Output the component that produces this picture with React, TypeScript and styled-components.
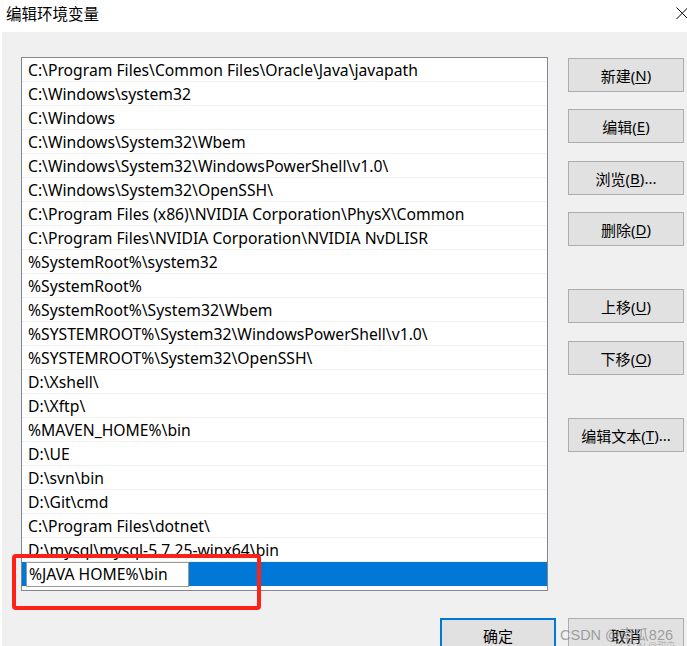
import React from 'react';
import styled, { createGlobalStyle } from 'styled-components';

const GlobalStyle = createGlobalStyle`
  html, body {
    margin: 0;
    padding: 0;
    background: #ffffff;
  }
  body {
    font-family: "Noto Sans", "Noto Sans CJK SC", sans-serif;
  }
`;

const paths = [
  'C:\\Program Files\\Common Files\\Oracle\\Java\\javapath',
  'C:\\Windows\\system32',
  'C:\\Windows',
  'C:\\Windows\\System32\\Wbem',
  'C:\\Windows\\System32\\WindowsPowerShell\\v1.0\\',
  'C:\\Windows\\System32\\OpenSSH\\',
  'C:\\Program Files (x86)\\NVIDIA Corporation\\PhysX\\Common',
  'C:\\Program Files\\NVIDIA Corporation\\NVIDIA NvDLISR',
  '%SystemRoot%\\system32',
  '%SystemRoot%',
  '%SystemRoot%\\System32\\Wbem',
  '%SYSTEMROOT%\\System32\\WindowsPowerShell\\v1.0\\',
  '%SYSTEMROOT%\\System32\\OpenSSH\\',
  'D:\\Xshell\\',
  'D:\\Xftp\\',
  '%MAVEN_HOME%\\bin',
  'D:\\UE',
  'D:\\svn\\bin',
  'D:\\Git\\cmd',
  'C:\\Program Files\\dotnet\\',
  'D:\\mysql\\mysql-5.7.25-winx64\\bin',
];

// gap = space above each button, in px
const sideButtons = [
  { label: '新建', key: 'N', gap: 1 },
  { label: '编辑', key: 'E', gap: 17 },
  { label: '浏览', key: 'B', gap: 18, dots: true },
  { label: '删除', key: 'D', gap: 17 },
  { label: '上移', key: 'U', gap: 43 },
  { label: '下移', key: 'O', gap: 18 },
  { label: '编辑文本', key: 'T', gap: 43, dots: true },
];

const Window = styled.div`
  position: relative;
  width: 687px;
  height: 646px;
  overflow: hidden;
  background: #ffffff;
  display: flex;
  flex-direction: column;
`;

const TitleBar = styled.div`
  height: 32px;
  flex: none;
  display: flex;
  align-items: center;
  justify-content: space-between;
  padding-left: 6px;
  box-sizing: border-box;
`;

const Title = styled.span`
  font-family: "Noto Sans CJK SC", sans-serif;
  font-size: 15.5px;
  color: #000000;
  margin-top: -7px;
`;

const CloseIcon = styled.svg`
  width: 12px;
  height: 13px;
  margin-right: -1px;
  margin-top: -6px;
`;

const Body = styled.div`
  flex: 1;
  margin-left: 2px;
  background: #f0f0f0;
  padding: 25px 0 0 19px;
  display: flex;
  flex-direction: column;
`;

const Main = styled.div`
  display: flex;
  gap: 20px;
`;

const ListBox = styled.div`
  width: 527px;
  height: 534px;
  box-sizing: border-box;
  border: 1px solid #828790;
  background: #ffffff;
  display: flex;
  flex-direction: column;
`;

const Row = styled.div<{ $selected?: boolean }>`
  height: 24px;
  flex: none;
  box-sizing: border-box;
  display: flex;
  align-items: center;
  padding-left: 6px;
  font-size: 15.7px;
  color: #000000;
  white-space: nowrap;
  background: ${(p) => (p.$selected ? '#0078d7' : '#ffffff')};
  border-bottom: 1px solid ${(p) => (p.$selected ? '#0078d7' : '#f0f0f0')};
`;

const EditField = styled.div`
  width: 163px;
  height: 25px;
  margin-left: -2px;
  margin-top: 1px;
  box-sizing: border-box;
  border: 1px solid #9a9a9a;
  background: #ffffff;
  font-size: 15.7px;
  line-height: 22px;
  padding-left: 2px;
  color: #000000;
`;

const ButtonColumn = styled.div`
  display: flex;
  flex-direction: column;
`;

const DialogButton = styled.div<{ $gap?: number; $default?: boolean }>`
  width: 116px;
  height: 34px;
  flex: none;
  box-sizing: border-box;
  margin-top: ${(p) => p.$gap ?? 0}px;
  border: ${(p) => (p.$default ? '2px solid #0078d7' : '1px solid #adadad')};
  background: #e1e1e1;
  display: flex;
  align-items: center;
  justify-content: center;
  font-family: "Noto Sans", "Noto Sans CJK SC", sans-serif;
  font-size: 15px;
  color: #000000;
  white-space: nowrap;
`;

const Accel = styled.span`
  text-decoration: underline;
  text-underline-offset: 2px;
`;

const Footer = styled.div`
  display: flex;
  gap: 12px;
  margin-top: 27px;
  padding-left: 419px;
`;

const Highlight = styled.div`
  position: absolute;
  left: 12px;
  top: 554px;
  width: 249px;
  height: 56px;
  box-sizing: border-box;
  border: 4px solid #fe2118;
  border-radius: 4px;
  pointer-events: none;
`;

const Watermark = styled.div`
  position: absolute;
  left: 560px;
  top: 623px;
  font-family: "Liberation Sans", "Noto Sans CJK SC", sans-serif;
  font-size: 14.5px;
  color: rgba(125, 125, 125, 0.7);
  pointer-events: none;
  white-space: nowrap;
`;

const WatermarkSmall = styled.div`
  position: absolute;
  left: 620px;
  top: 639px;
  font-family: "Liberation Sans", "Noto Sans CJK SC", sans-serif;
  font-size: 9px;
  color: rgba(150, 150, 150, 0.6);
  pointer-events: none;
  white-space: nowrap;
`;

export default function App() {
  return (
    <>
      <GlobalStyle />
      <Window>
        <TitleBar>
          <Title>编辑环境变量</Title>
          <CloseIcon viewBox="0 0 12 13">
            <path d="M0.5 0.5 L12 12 M12 0.5 L0.5 12" stroke="#000" strokeWidth="1" fill="none" />
          </CloseIcon>
        </TitleBar>
        <Body>
          <Main>
            <ListBox>
              {paths.map((path) => (
                <Row key={path}>{path}</Row>
              ))}
              <Row $selected>
                <EditField>%JAVA HOME%\bin</EditField>
              </Row>
            </ListBox>
            <ButtonColumn>
              {sideButtons.map((b) => (
                <DialogButton key={b.label} $gap={b.gap}>
                  {b.label}(<Accel>{b.key}</Accel>){b.dots ? '...' : ''}
                </DialogButton>
              ))}
            </ButtonColumn>
          </Main>
          <Footer>
            <DialogButton $default>确定</DialogButton>
            <DialogButton>取消</DialogButton>
          </Footer>
        </Body>
        <Highlight />
        <Watermark>CSDN @南瓜826</Watermark>
        <WatermarkSmall>CSDN @甜虫</WatermarkSmall>
      </Window>
    </>
  );
}
